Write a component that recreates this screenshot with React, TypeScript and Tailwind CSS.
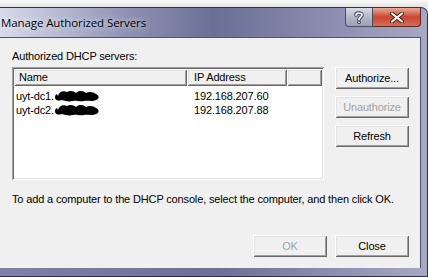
const sunken =
  "shadow-[inset_1px_1px_0_#a0a0a0,inset_-1px_-1px_0_#ffffff,inset_2px_2px_0_#696969,inset_-2px_-2px_0_#e3e3e3]";
const raised =
  "shadow-[inset_1px_1px_0_#ffffff,inset_-1px_-1px_0_#696969,inset_2px_2px_0_#e3e3e3,inset_-2px_-2px_0_#a0a0a0]";

const Blob = () => (
  <svg width="46" height="13" viewBox="0 0 46 13" className="inline-block align-[-2px]">
    <path
      d="M1 9 C1 5 3 4 4 7 C5 3 9 1 13 3 C16 1 20 2 22 4 C25 1 30 2 32 4 C35 2 40 3 42 5 C45 6 46 10 42 11 C38 13 33 11 30 12 C26 13 22 11 19 12 C15 13 11 12 8 11 C5 12 2 12 1 9 Z"
      fill="#000"
    />
  </svg>
);

const Button = ({ label, disabled }: { label: string; disabled?: boolean }) => (
  <div
    className={`flex h-[22px] w-[74px] items-center justify-center bg-[#f0f0f0] text-[11px] ${raised} ${
      disabled ? "text-[#a0a0a0]" : "text-black"
    }`}
  >
    {label}
  </div>
);

const servers = [
  { name: "uyt-dc1.", ip: "192.168.207.60" },
  { name: "uyt-dc2.", ip: "192.168.207.88" },
];

export default function App() {
  return (
    <div className="h-[277px] w-[428px] overflow-hidden bg-[#f3f3f3] font-['Liberation_Sans',sans-serif]">
      <div className="h-[7px] bg-gradient-to-b from-[#fafafa] to-[#e4e4e4]" />
      <div className="flex h-[270px] flex-col rounded-tr-[7px] border-t border-r border-b border-[#30324a] bg-gradient-to-r from-[#7f82a8] via-[#6c6f96] to-[#a6a8c4]">
        {/* title bar */}
        <div className="flex h-[29px] items-start justify-between bg-gradient-to-r from-[#d6daea] via-[#b2b6d0]/40 via-30% to-transparent to-50%">
          <span className="mt-[7px] pl-[1px] font-['Open_Sans',sans-serif] text-[11.5px] leading-[16px] tracking-[-0.1px] text-black [text-shadow:0_0_6px_#ffffff]">
            Manage Authorized Servers
          </span>
          <div className="mr-[6px] flex h-[19px]">
            <div className="flex w-[28px] items-center justify-center rounded-bl-[4px] border border-t-0 border-[#4a4c62] bg-gradient-to-b from-[#d8dae4] via-[#b4b7c8] to-[#9ea1b6]">
              <svg width="10" height="13" viewBox="0 0 10 13">
                <path
                  d="M2 4 C2 1.5 8 1.5 8 4 C8 6 5 6 5 8.5"
                  fill="none"
                  stroke="#3a3c50"
                  strokeWidth="3.6"
                  strokeLinecap="round"
                />
                <circle cx="5" cy="11.3" r="1.8" fill="#3a3c50" />
                <path
                  d="M2 4 C2 1.5 8 1.5 8 4 C8 6 5 6 5 8.5"
                  fill="none"
                  stroke="#ffffff"
                  strokeWidth="1.8"
                  strokeLinecap="round"
                />
                <circle cx="5" cy="11.3" r="0.9" fill="#ffffff" />
              </svg>
            </div>
            <div className="flex w-[48px] items-center justify-center rounded-br-[4px] border border-t-0 border-l-0 border-[#5a2a22] bg-gradient-to-b from-[#e9a899] via-[#c9452f] to-[#d26c58]">
              <svg width="14" height="11" viewBox="0 0 14 11">
                <path d="M2 1.5 L12 9.5 M12 1.5 L2 9.5" stroke="#4a1a12" strokeWidth="4" strokeLinecap="round" />
                <path d="M2 1.5 L12 9.5 M12 1.5 L2 9.5" stroke="#ffffff" strokeWidth="2.2" strokeLinecap="round" />
              </svg>
            </div>
          </div>
        </div>

        {/* client area */}
        <div className="mr-[6px] mb-[8px] flex h-[231px] flex-col border-t border-r border-[#50536e] bg-[#f0f0f0] pt-[12px] pr-[11px] pl-[12px] text-[11px] tracking-[-0.15px] text-black">
          <div className="h-[13px] leading-[13px]">Authorized DHCP servers:</div>
          <div className="mt-[4px] flex gap-[11px]">
            <div className={`h-[113px] w-[312px] bg-white p-[2px] ${sunken}`}>
              <div className="flex h-[17px] text-[11px] leading-[17px]">
                <div className={`w-[173px] bg-[#f0f0f0] pl-[5px] ${raised}`}>Name</div>
                <div className={`w-[100px] bg-[#f0f0f0] pl-[7px] ${raised}`}>IP Address</div>
                <div className={`flex-1 bg-[#f0f0f0] ${raised}`} />
              </div>
              <div className="pt-[3px]">
                {servers.map((s) => (
                  <div key={s.ip} className="flex h-[14px] items-center leading-[14px]">
                    <div className="w-[173px] pl-[2px] whitespace-nowrap">
                      {s.name}
                      <Blob />
                    </div>
                    <div className="pl-[7px]">{s.ip}</div>
                  </div>
                ))}
              </div>
            </div>
            <div className="flex flex-col gap-[7px]">
              <Button label="Authorize..." />
              <Button label="Unauthorize" disabled />
              <Button label="Refresh" />
            </div>
          </div>
          <div className="mt-[13px] h-[13px] leading-[13px] whitespace-nowrap">
            To add a computer to the DHCP console, select the computer, and then click OK.
          </div>
          <div className="mt-[29px] flex justify-end gap-[8px]">
            <Button label="OK" disabled />
            <Button label="Close" />
          </div>
        </div>
      </div>
    </div>
  );
}
